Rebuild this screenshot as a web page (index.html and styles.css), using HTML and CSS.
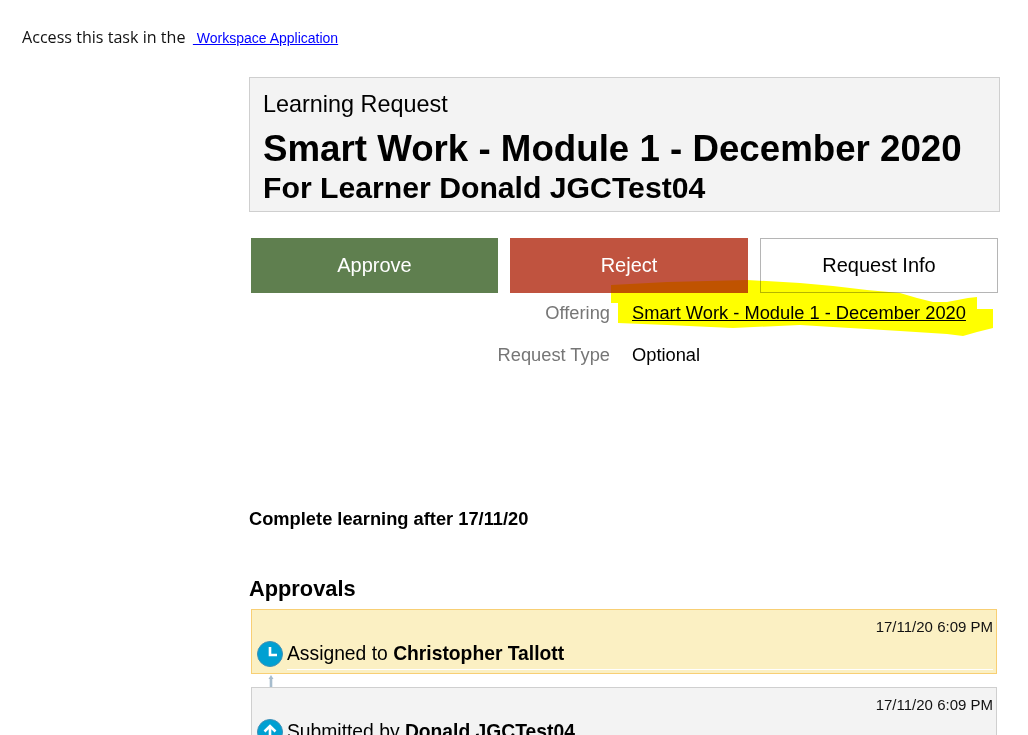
FILE: index.html
```html
<!DOCTYPE html>
<html lang="en">
<head>
<meta charset="utf-8">
<title>Learning Request</title>
<link rel="stylesheet" href="styles.css">
</head>
<body>
<p class="access"><span class="access-text">Access this task in the</span> <a class="access-link" href="#">&nbsp;Workspace Application</a></p>
<main class="main">
  <header class="head">
    <div class="head-kicker">Learning Request</div>
    <h1 class="head-title">Smart Work - Module 1 - December 2020</h1>
    <h2 class="head-sub">For Learner Donald JGCTest04</h2>
  </header>
  <div class="actions">
    <a class="btn btn-approve" href="#">Approve</a>
    <a class="btn btn-reject" href="#">Reject</a>
    <a class="btn btn-info" href="#">Request Info</a>
  </div>
  <dl class="details">
    <dt>Offering</dt>
    <dd><a href="#">Smart Work - Module 1 - December 2020</a></dd>
    <dt>Request Type</dt>
    <dd>Optional</dd>
  </dl>
  <p class="note">Complete learning after 17/11/20</p>
  <h3 class="approvals">Approvals</h3>
  <section class="card card-current">
    <div class="card-date">17/11/20 6:09 PM</div>
    <div class="card-row">
      <svg class="card-icon" viewBox="0 0 26 26"><circle cx="13" cy="13" r="12.500" fill="#00a0d2" stroke="#3f8fb5"/><path d="M13 6v8h7" fill="none" stroke="#fff" stroke-width="2.600"/></svg>
      <span class="card-text">Assigned to <b>Christopher Tallott</b></span>
    </div>
  </section>
  <svg class="connector" viewBox="0 0 8 13"><path d="M4 13V4" stroke="#a6bccd" stroke-width="2.600"/><path d="M1.500 5L4 1l2.500 4z" fill="#a6bccd"/></svg>
  <section class="card">
    <div class="card-date">17/11/20 6:09 PM</div>
    <div class="card-row">
      <svg class="card-icon" viewBox="0 0 26 26"><circle cx="13" cy="13" r="12.500" fill="#00a0d2" stroke="#3f8fb5"/><path d="M13 20V7M7.500 12.500L13 7l5.500 5.500" fill="none" stroke="#fff" stroke-width="2.600"/></svg>
      <span class="card-text">Submitted by <b>Donald JGCTest04</b></span>
    </div>
  </section>
</main>
<svg class="marker" viewBox="0 0 1028 735"><path d="M611 285L667 282L747 280L800 283L833 286L867 290L900 293L917 298L933 302L947 302L968 298L977 297L977 309L993 309L993 328L977 332L963 336L947 334L900 331L867 329L833 327L800 325L733 328L667 325L618 323L618 303L611 303Z" fill="#ffff00"/></svg>
</body>
</html>
```
FILE: styles.css
```css
html, body { margin: 0; padding: 0; background: #fff; }
body { height: 735px; overflow: hidden; position: relative; color: #000; font-family: "Liberation Sans", Arial, sans-serif; }
.access { margin: 0; padding: 27px 0 0 22px; height: 77px; box-sizing: border-box; line-height: 20px; }
.access-text { font-family: "Open Sans", sans-serif; font-size: 16.100px; color: #111; margin-right: 3px; }
.access-link { font-size: 14px; color: #0000ff; text-decoration: underline; }
.main { margin-left: 249px; width: 751px; }
.head { background: #f3f3f3; border: 1px solid #cfcfcf; height: 135px; box-sizing: border-box; padding: 12px 13px 0; }
.head-kicker { font-size: 23.400px; line-height: 28px; }
.head-title { margin: 10px 0 0; font-size: 36.700px; line-height: 42px; font-weight: bold; }
.head-sub { margin: 1px 0 0; font-size: 30.200px; line-height: 34px; font-weight: bold; }
.actions { display: flex; gap: 12px; margin: 26px 2px 0; height: 55px; }
.btn { display: flex; align-items: center; justify-content: center; font-size: 20px; text-decoration: none; box-sizing: border-box; width: 238px; }
.btn-approve { width: 247px; background: #5f7f4f; color: #fff; }
.btn-reject { background: #c0533f; color: #fff; }
.btn-info { background: #fff; border: 1px solid #b5b5b5; color: #000; }
.details { display: grid; grid-template-columns: 361px 1fr; column-gap: 22px; row-gap: 21px; margin: 9px 0 0; font-size: 18.300px; line-height: 21px; position: relative; z-index: 1; }
.details dt { text-align: right; color: #767676; }
.details dd { margin: 0; }
.details a { color: #000; text-decoration: underline; }
.note { margin: 143px 0 0; font-size: 18.300px; line-height: 21px; font-weight: bold; }
.approvals { margin: 47px 0 0; font-size: 21.800px; line-height: 26px; font-weight: bold; }
.card { margin: 0 3px 0 2px; box-sizing: border-box; height: 86px; background: #f3f3f3; border: 1px solid #cfcfcf; padding: 0 3px 0 5px; }
.card-current { margin-top: 7px; height: 65px; background: #fbf0c3; border-color: #f8cf74; }
.card-date { text-align: right; font-size: 15px; line-height: 18px; padding-top: 8px; color: #111; }
.card-row { display: flex; align-items: flex-start; gap: 4px; font-size: 19.300px; line-height: 26px; margin-top: 5px; }
.card-icon { width: 26px; height: 26px; flex: none; }
.card-text { flex: 1; padding-bottom: 2px; border-bottom: 1px solid #fff; }
.connector { display: block; width: 8px; height: 13px; margin-left: 18px; }
.marker { position: absolute; left: 0; top: 0; width: 1028px; height: 735px; mix-blend-mode: multiply; pointer-events: none; z-index: 2; }
```
